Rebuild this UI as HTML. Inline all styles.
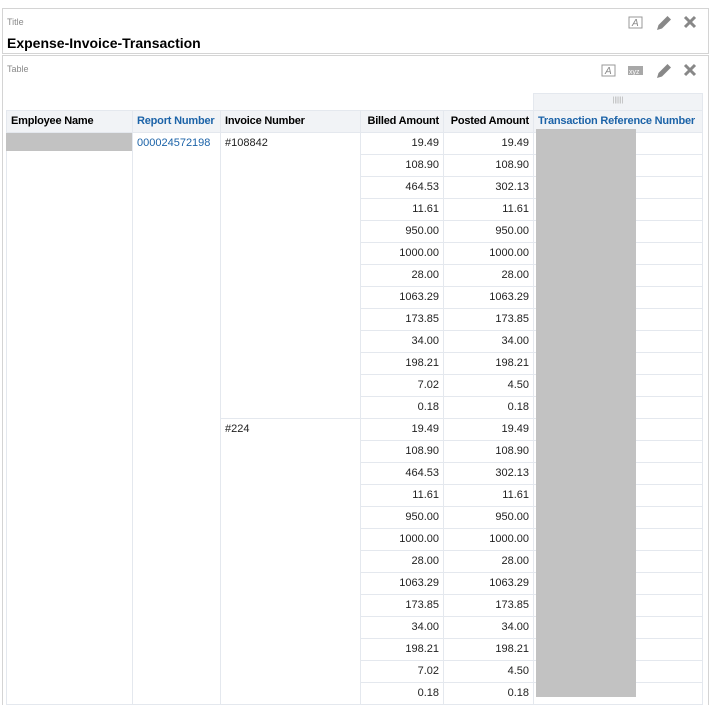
<!DOCTYPE html>
<html><head><style>
html,body{margin:0;width:711px;height:705px;overflow:hidden}
body{background:#fff;font-family:"Liberation Sans",Arial,sans-serif;position:relative}
.box{position:absolute;border:1px solid #d4d4d4;background:#fff}
.lbl{position:absolute;font-size:9px;color:#8a8a8a}
table{position:absolute;left:6px;top:110px;width:696px;border-collapse:collapse;font-size:11px;table-layout:fixed}
td,th{border:1px solid #e4e8ee;height:21px;padding:0 4px;white-space:nowrap;overflow:hidden;vertical-align:top;line-height:21px}
th{background:#f1f3f6;font-weight:bold;text-align:left;color:#000;letter-spacing:-0.2px}
th.b{color:#1c63a8}
td.n{text-align:right;color:#222}
td{color:#222}
.gray{position:absolute;background:#c2c2c2}
</style></head><body>
<div class="box" style="left:2px;top:8px;width:705px;height:44px"></div>
<div class="lbl" style="left:7px;top:17px">Title</div>
<div style="position:absolute;left:7px;top:35px;font-size:14px;font-weight:bold">Expense-Invoice-Transaction</div>
<div class="box" style="left:2px;top:55px;width:705px;height:660px"></div>
<div class="lbl" style="left:7px;top:64px">Table</div>
<svg style="position:absolute;left:620px;top:12px" width="80" height="20"><rect x="9" y="5" width="13" height="11" fill="none" stroke="#999" stroke-width="1"/><text x="12" y="14" font-size="10" font-style="italic" fill="#888" font-family="Liberation Sans">A</text><path d="M37 18l1.5-5 9-9 3.5 3.5-9 9z" fill="#888"/><path d="M65 5l10 10M75 5l-10 10" stroke="#888" stroke-width="3"/></svg>
<svg style="position:absolute;left:594px;top:60px" width="110" height="20"><rect x="8" y="5" width="13" height="11" fill="none" stroke="#999"/><text x="11" y="14" font-size="10" font-style="italic" fill="#888" font-family="Liberation Sans">A</text><rect x="34" y="6" width="15" height="9" fill="#a8a8a8"/><text x="35" y="14" font-size="7" fill="#fff" font-family="Liberation Sans">xyz</text><path d="M63 18l1.5-5 9-9 3.5 3.5-9 9z" fill="#888"/><path d="M91 5l10 10M101 5l-10 10" stroke="#888" stroke-width="3"/></svg>
<div style="position:absolute;left:533px;top:93px;width:168px;height:16px;background:#f1f3f6;border:1px solid #e4e8ee;font-size:7px;color:#aaa;text-align:center;line-height:14px">||||||</div>
<table>
<colgroup><col style="width:126px"><col style="width:88px"><col style="width:140px"><col style="width:83px"><col style="width:90px"><col style="width:169px"></colgroup>
<tr><th>Employee Name</th><th class="b">Report Number</th><th>Invoice Number</th><th style="text-align:right">Billed Amount</th><th style="text-align:right">Posted Amount</th><th class="b">Transaction Reference Number</th></tr>
<tr><td rowspan="26"></td><td rowspan="26" style="color:#1c63a8">000024572198</td><td rowspan="13">#108842</td><td class="n">19.49</td><td class="n">19.49</td><td></td></tr>
<tr><td class="n">108.90</td><td class="n">108.90</td><td></td></tr>
<tr><td class="n">464.53</td><td class="n">302.13</td><td></td></tr>
<tr><td class="n">11.61</td><td class="n">11.61</td><td></td></tr>
<tr><td class="n">950.00</td><td class="n">950.00</td><td></td></tr>
<tr><td class="n">1000.00</td><td class="n">1000.00</td><td></td></tr>
<tr><td class="n">28.00</td><td class="n">28.00</td><td></td></tr>
<tr><td class="n">1063.29</td><td class="n">1063.29</td><td></td></tr>
<tr><td class="n">173.85</td><td class="n">173.85</td><td></td></tr>
<tr><td class="n">34.00</td><td class="n">34.00</td><td></td></tr>
<tr><td class="n">198.21</td><td class="n">198.21</td><td></td></tr>
<tr><td class="n">7.02</td><td class="n">4.50</td><td></td></tr>
<tr><td class="n">0.18</td><td class="n">0.18</td><td></td></tr>
<tr><td rowspan="13">#224</td><td class="n">19.49</td><td class="n">19.49</td><td></td></tr>
<tr><td class="n">108.90</td><td class="n">108.90</td><td></td></tr>
<tr><td class="n">464.53</td><td class="n">302.13</td><td></td></tr>
<tr><td class="n">11.61</td><td class="n">11.61</td><td></td></tr>
<tr><td class="n">950.00</td><td class="n">950.00</td><td></td></tr>
<tr><td class="n">1000.00</td><td class="n">1000.00</td><td></td></tr>
<tr><td class="n">28.00</td><td class="n">28.00</td><td></td></tr>
<tr><td class="n">1063.29</td><td class="n">1063.29</td><td></td></tr>
<tr><td class="n">173.85</td><td class="n">173.85</td><td></td></tr>
<tr><td class="n">34.00</td><td class="n">34.00</td><td></td></tr>
<tr><td class="n">198.21</td><td class="n">198.21</td><td></td></tr>
<tr><td class="n">7.02</td><td class="n">4.50</td><td></td></tr>
<tr><td class="n">0.18</td><td class="n">0.18</td><td></td></tr>
</table>
<div class="gray" style="left:6px;top:133px;width:126px;height:18px"></div>
<div class="gray" style="left:536px;top:129px;width:100px;height:568px"></div>
</body></html>
